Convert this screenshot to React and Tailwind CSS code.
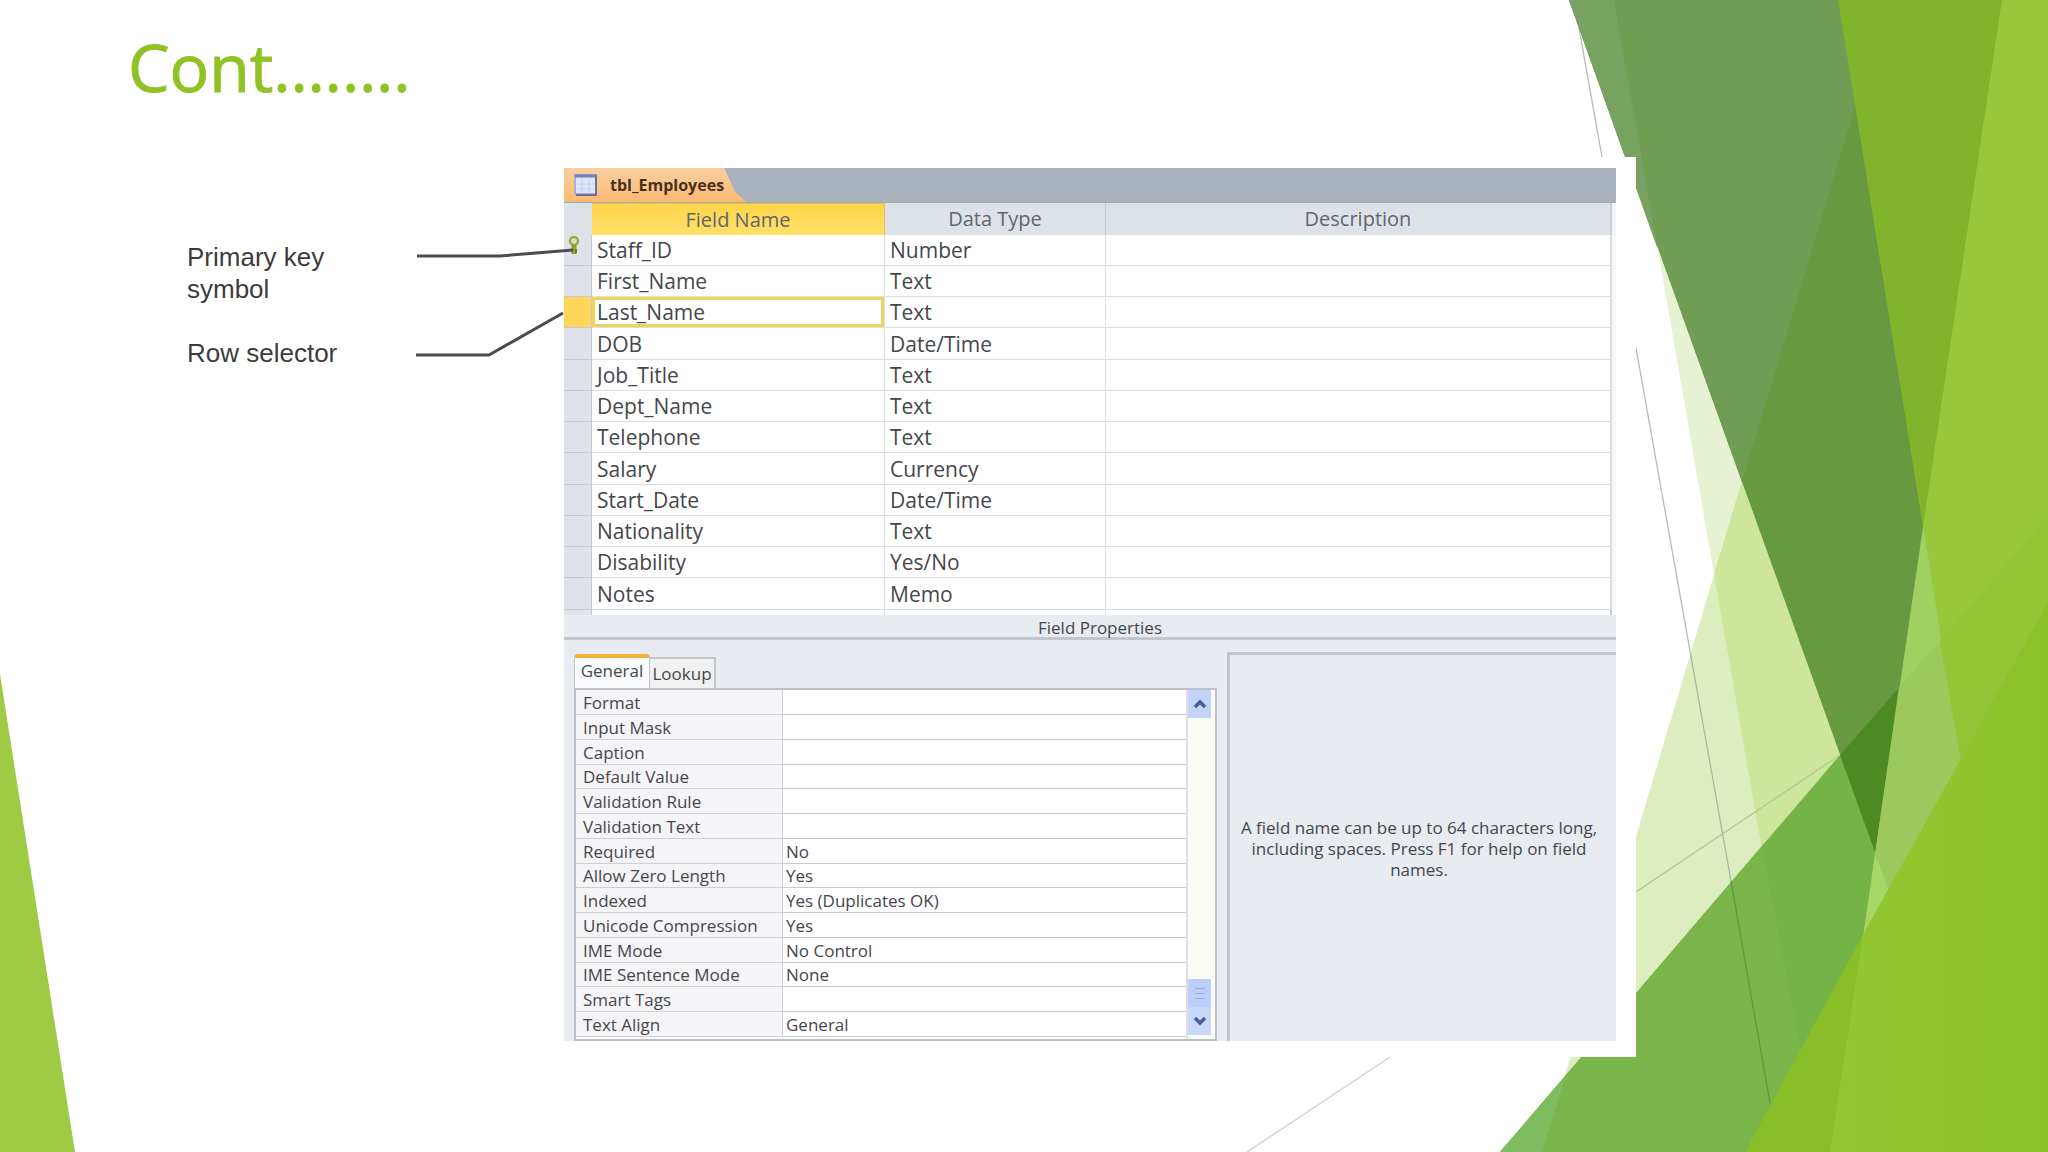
import { useState } from 'react'

const FIELDS = [
  { name: 'Staff_ID', type: 'Number', primary: true },
  { name: 'First_Name', type: 'Text' },
  { name: 'Last_Name', type: 'Text' },
  { name: 'DOB', type: 'Date/Time' },
  { name: 'Job_Title', type: 'Text' },
  { name: 'Dept_Name', type: 'Text' },
  { name: 'Telephone', type: 'Text' },
  { name: 'Salary', type: 'Currency' },
  { name: 'Start_Date', type: 'Date/Time' },
  { name: 'Nationality', type: 'Text' },
  { name: 'Disability', type: 'Yes/No' },
  { name: 'Notes', type: 'Memo' },
]

const PROPERTIES = [
  ['Format', ''],
  ['Input Mask', ''],
  ['Caption', ''],
  ['Default Value', ''],
  ['Validation Rule', ''],
  ['Validation Text', ''],
  ['Required', 'No'],
  ['Allow Zero Length', 'Yes'],
  ['Indexed', 'Yes (Duplicates OK)'],
  ['Unicode Compression', 'Yes'],
  ['IME Mode', 'No Control'],
  ['IME Sentence Mode', 'None'],
  ['Smart Tags', ''],
  ['Text Align', 'General'],
]

// Facets are painted back to front, each one running under the next so no seams show
function Backdrop() {
  return (
    <svg className="absolute inset-0 w-full h-full" viewBox="0 0 2048 1152" preserveAspectRatio="none" aria-hidden="true">
      <defs>
        <linearGradient id="front" x1="0" x2="1" y1="0" y2="0">
          <stop offset="0" stopColor="#93c731" />
          <stop offset="0.5" stopColor="#91c52e" />
          <stop offset="1" stopColor="#8bc227" />
        </linearGradient>
      </defs>
      <polygon points="0,674 75,1152 0,1152" fill="#9fcb44" />
      {/* pale facets */}
      <polygon points="1658,250 1800,250 1800,574 1714,574" fill="#e6f2d3" />
      <polygon points="1742,481 1860,481 1860,800 1542,1152" fill="#deedbf" />
      <polygon points="1742,481 1900,700 1840,800 1762,850 1714,574" fill="#cde69c" />
      {/* lower green band */}
      <polygon points="1500,1152 1840,755 1900,755 1900,1152" fill="#74b345" />
      <polygon points="1500,1152 1762,846 1820,1152" fill="#7ab54c" />
      <polygon points="1500,1152 1566,1075 1542,1152" fill="#7fbc5f" />
      {/* dark band */}
      <polygon points="1569,0 1860,0 1930,527 1888,888" fill="#679941" />
      <polygon points="1569,0 1860,0 1855,107 1742,482" fill="#709c53" />
      <polygon points="1569,0 1614,0 1658,250" fill="#78a260" />
      <polygon points="1840,755 1910,675 1888,888" fill="#4e8a22" />
      {/* right column */}
      <polygon points="1838,0 2010,0 1930,570" fill="#82b32d" />
      <polygon points="1923,527 1990,527 1990,900 1863,938" fill="#a0d062" />
      <polygon points="1899,687 1940,641 1990,641 1990,900 1888,888 1875,854" fill="#9bc95e" />
      <polygon points="1875,854 1888,888 1863,938" fill="#a6d666" />
      <polygon points="2002,0 2048,0 2048,700 1965,785 1923,527" fill="#98c73d" />
      <polygon points="2048,515 2048,700 1965,785 1940,641" fill="#94c537" />
      <polygon points="2048,603 2048,1152 1745,1152 1863,935" fill="#89be28" />
      <polygon points="2048,603 2048,1152 1830,1152 1863,935" fill="url(#front)" />
      {/* hairlines */}
      <path d="M1574 0L1731 881" stroke="#8a8f86" strokeOpacity="0.6" strokeWidth="1.3" />
      <path d="M1731 881L1770 1103" stroke="#5f9a38" strokeWidth="1.3" />
      <path d="M1247 1152L1390 1057" stroke="#cfcfcf" strokeWidth="1.3" />
      <path d="M1390 1057L1840 755" stroke="#b5c596" strokeWidth="1.3" />
    </svg>
  )
}

function TableIcon() {
  return (
    <svg width="24" height="22" viewBox="0 0 24 22" aria-hidden="true">
      <rect x="1" y="1" width="21" height="19" fill="#dfe7fb" stroke="#a9aecb" strokeWidth="2" />
      <path d="M1 2h22" stroke="#7182b8" strokeWidth="3" />
      <path d="M22 2v19H2" fill="none" stroke="#6b7196" strokeWidth="2" />
      <path d="M8 5v14M15 5v14M3 10h17M3 15h17" stroke="#c3cff2" strokeWidth="1" />
    </svg>
  )
}

function KeyIcon() {
  return (
    <svg width="12" height="22" viewBox="0 0 12 22" aria-label="Primary key">
      <circle cx="6" cy="6" r="4" fill="#dfe3b4" stroke="#9aa648" strokeWidth="2.4" />
      <path d="M6 10v9" stroke="#8f9d35" strokeWidth="5" />
      <path d="M8 14v4" stroke="#6d7f22" strokeWidth="2" />
    </svg>
  )
}

function Chevron({ up }) {
  return (
    <svg width="14" height="10" viewBox="0 0 14 10" aria-hidden="true">
      <path d={up ? 'M2 8l5-5 5 5' : 'M2 2l5 5 5-5'} fill="none" stroke="#4a5f96" strokeWidth="3.5" />
    </svg>
  )
}

function FieldGrid({ active, onSelect }) {
  return (
    <table className="w-full table-fixed border-separate border-spacing-0 bg-white text-[21px] leading-[30px] text-[#46464c]">
      <colgroup>
        <col className="w-[28px]" />
        <col className="w-[293px]" />
        <col className="w-[221px]" />
        <col />
        <col className="w-[6px]" />
      </colgroup>
      <thead>
        <tr className="h-8 bg-[#dde2e9] text-[20px] text-[#62656c]">
          <td className="p-0" />
          <th className="p-0 font-normal bg-linear-to-b from-[#ffd549] to-[#ffe168] border-t border-r border-[#e8bd4d]">Field Name</th>
          <th className="p-0 font-normal border-r border-[#c5cad3]">Data Type</th>
          <th className="p-0 font-normal">Description</th>
          <td className="p-0 border-l-2 border-[#c9cdd4] bg-[#f3f4f6]" />
        </tr>
      </thead>
      <tbody>
        {FIELDS.map(f => (
          <tr key={f.name} onClick={() => onSelect(f.name)} className="h-[31px] nth-[4n]:h-8">
            <td className={`p-0 border-b border-r border-[#c5cad2] ${active === f.name ? 'bg-[#ffd65a]' : 'bg-[#dfe3e9]'}`}>
              {f.primary && <div className="pl-1 h-[30px]"><KeyIcon /></div>}
            </td>
            <td className={`p-0 pl-[5px] border-b border-r border-[#dcdee3] ${active === f.name ? 'shadow-[inset_0_0_0_3px_#f0d35c]' : ''}`}>{f.name}</td>
            <td className="p-0 pl-[5px] border-b border-r border-[#dcdee3]">{f.type}</td>
            <td className="p-0 border-b border-[#dcdee3]" />
            <td className="p-0 border-l-2 border-[#dcdde0] bg-[#f7f7f8]" />
          </tr>
        ))}
        <tr className="h-[5px]">
          <td className="p-0 bg-[#dfe3e9] border-r border-[#c5cad2]" />
          <td className="p-0 border-r border-[#dcdee3]" />
          <td className="p-0 border-r border-[#dcdee3]" />
          <td className="p-0" />
          <td className="p-0 border-l-2 border-[#c3c6cc]" />
        </tr>
      </tbody>
    </table>
  )
}

function PropertySheet() {
  const [tab, setTab] = useState('General')

  return (
    <div className="w-[643px] flex flex-col pt-3.5">
      <div className="flex items-end h-[34px]">
        <button
          onClick={() => setTab('General')}
          aria-pressed={tab === 'General'}
          className="w-[76px] h-[34px] leading-[26px] pb-1 border-t-4 border-x border-t-[#f2b134] border-x-[#c2c6cb] rounded-t bg-[#fafbfd]"
        >
          General
        </button>
        <button
          onClick={() => setTab('Lookup')}
          aria-pressed={tab === 'Lookup'}
          className="w-[66px] h-[31px] border-t-2 border-r-2 border-[#c2c6cb] bg-[#f1f1f2]"
        >
          Lookup
        </button>
      </div>
      <div className="flex border-2 border-[#bcc1c7] bg-white">
        <div className="flex-1 pb-0.5">
          <table className="w-full table-fixed border-separate border-spacing-0 leading-[23px]">
            <colgroup>
              <col className="w-[207px]" />
              <col />
            </colgroup>
            <tbody>
              {PROPERTIES.map(([label, value]) => (
                <tr key={label} className="h-[25px] nth-[4n]:h-6">
                  <th className="p-0 pl-[7px] text-left font-normal bg-[#f5f5f7] border-b border-r border-[#cfd0d3]">
                    <label htmlFor={label}>{label}</label>
                  </th>
                  <td className="p-0 border-b border-[#c9cacc]">
                    <input id={label} defaultValue={value} className="block w-full h-[23px] pl-[3px] bg-transparent outline-none" />
                  </td>
                </tr>
              ))}
            </tbody>
          </table>
        </div>
        <div className="w-[29px] flex flex-col justify-between border-l-2 border-[#dcdfe6] bg-[#fafbf3] pr-1 pb-1">
          <button aria-label="Scroll up" className="h-7 flex items-center justify-center bg-[#c3d3fb]">
            <Chevron up />
          </button>
          <div className="flex flex-col">
            <div className="h-7 flex flex-col items-center justify-center gap-1 bg-[#bccffb]">
              <span className="w-2.5 h-px bg-[#93aeea]" />
              <span className="w-2.5 h-px bg-[#93aeea]" />
              <span className="w-2.5 h-px bg-[#93aeea]" />
            </div>
            <button aria-label="Scroll down" className="h-7 flex items-center justify-center bg-[#c8d8fb]">
              <Chevron />
            </button>
          </div>
        </div>
      </div>
    </div>
  )
}

function DesignWindow() {
  const [active, setActive] = useState('Last_Name')

  return (
    <div className="flex-1 min-w-0 bg-[#e8ebf0] font-['Open_Sans',sans-serif] text-[17px] text-[#46464c]">
      <div className="flex bg-[#a9b2bd] h-[35px] border-b border-[#9fa8b5]">
        <div className="w-[182px] flex items-center gap-3 pl-2.5 bg-linear-to-b from-[#f9cfa0] to-[#fcb973] [clip-path:polygon(0_0,88%_0,94%_70%,100%_100%,0_100%)]">
          <TableIcon />
          <span className="text-base font-bold text-[#4a3020]">tbl_Employees</span>
        </div>
      </div>

      <FieldGrid active={active} onSelect={setActive} />

      <div className="h-[25px] leading-[25px] text-center border-b-3 border-[#c0c5cf] pl-5">Field Properties</div>

      <div className="flex pl-2.5">
        <PropertySheet />
        <div className="flex-1 flex items-center justify-center ml-2.5 mt-3 pl-2 pr-4 border-t-3 border-l-3 border-[#bfc4cd]">
          <p className="text-center leading-[21px]">
            A field name can be up to 64 characters long, including spaces. Press F1 for help on field names.
          </p>
        </div>
      </div>
    </div>
  )
}

export default function App() {
  return (
    <div className="relative min-h-screen overflow-hidden bg-white">
      <Backdrop />

      <main className="relative">
        <h1 className="h-[157px] pl-32 pt-6 text-[66px] leading-[84px] text-[#90c226] font-['Open_Sans',sans-serif] [-webkit-text-stroke:1px_#90c226]">Cont.…….</h1>

        <section className="ml-[187px] mr-[412px] pt-[11px] pb-4 pr-5 flex bg-white">
          <div className="w-[229px] pt-[73px] font-['Liberation_Sans',sans-serif] text-[26px] leading-8 text-[#3c3c3c]">
            <p>Primary key<br />symbol</p>
            <p className="mt-8">Row selector</p>
          </div>
          {/* callout leaders run a little way into the window */}
          <svg className="relative z-10 w-[148px] h-[200px] overflow-visible" viewBox="0 0 148 200" aria-hidden="true">
            <path d="M1 88H84L157 82M0 187H73L147 145" fill="none" stroke="#4c4c4c" strokeWidth="3" />
          </svg>
          <DesignWindow />
        </section>
      </main>
    </div>
  )
}
